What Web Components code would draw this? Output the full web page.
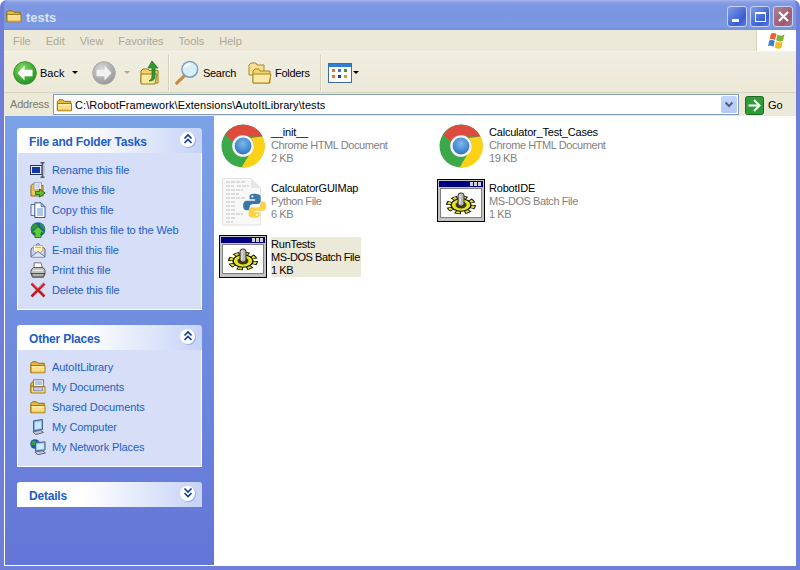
<!DOCTYPE html>
<html>
<head>
<meta charset="utf-8">
<title>tests</title>
<style>
html,body{margin:0;padding:0;height:100%;background:#fff;overflow:hidden;}
</style>
</head>
<body>

<xp-window>
    <xp-titlebar slot="top">tests</xp-titlebar>
    <xp-menubar slot="top"></xp-menubar>
    <xp-toolbar slot="top"></xp-toolbar>
    <xp-address slot="top" path="C:\RobotFramework\Extensions\AutoItLibrary\tests"></xp-address>

    <xp-sidebar slot="side">
        <task-panel heading="File and Folder Tasks">
            <task-link icon="rename">Rename this file</task-link>
            <task-link icon="move">Move this file</task-link>
            <task-link icon="copy">Copy this file</task-link>
            <task-link icon="publish">Publish this file to the Web</task-link>
            <task-link icon="email">E-mail this file</task-link>
            <task-link icon="print">Print this file</task-link>
            <task-link icon="delete">Delete this file</task-link>
        </task-panel>
        <task-panel heading="Other Places">
            <task-link icon="folder">AutoItLibrary</task-link>
            <task-link icon="docs">My Documents</task-link>
            <task-link icon="folder">Shared Documents</task-link>
            <task-link icon="computer">My Computer</task-link>
            <task-link icon="network">My Network Places</task-link>
        </task-panel>
        <task-panel heading="Details" collapsed></task-panel>
    </xp-sidebar>

    <file-grid slot="main">
        <file-tile icon="chrome" name="__init__" kind="Chrome HTML Document" size="2 KB"></file-tile>
        <file-tile icon="chrome" name="Calculator_Test_Cases" kind="Chrome HTML Document" size="19 KB"></file-tile>
        <file-tile icon="python" name="CalculatorGUIMap" kind="Python File" size="6 KB"></file-tile>
        <file-tile icon="batch" name="RobotIDE" kind="MS-DOS Batch File" size="1 KB"></file-tile>
        <file-tile icon="batch" name="RunTests" kind="MS-DOS Batch File" size="1 KB" selected></file-tile>
    </file-grid>
</xp-window>

<script>
// ICONS
const folderBody = `
    <path d="M.8 13.500V4.500L2.500 2.800H6.500L8 4.300H14.200V13.500Z" fill="#e9b93c" stroke="#8f6a14"/>
    <path d="M1 13.800V6.500H15V13.800Z" fill="#fbdf86" stroke="#a47a1a"/>
    <path d="M2 7.800H14" stroke="#fff3c4"/>
    <path d="M2 13H14" stroke="#e0ad35"/>`;

const smallIcons = {
    rename: `<rect x=".5" y="3.500" width="11" height="9" fill="#e6ebf6" stroke="#2d3350"/><rect x="2" y="5" width="8" height="6" fill="#0f3aa8"/>
        <path d="M12.500 .8V15.200M10.500 .8H14.500M10.500 15.200H14.500" stroke="#4d5570" stroke-width="1.500" fill="none"/><rect x="11.500" y="4" width="3.500" height="8" fill="#bcc6dc"/><path d="M12.500 3V13" stroke="#5a6280" stroke-width="1.200"/>`,
    move: `<path d="M1 14V3.500L2.500 2H6L7.500 3.500H13V14Z" fill="#f0c654" stroke="#8f6a14"/><rect x="4" y=".8" width="7.500" height="7" fill="#f4f6fb" stroke="#7d8aa8" stroke-width=".8"/>
        <path d="M5.500 3H10M5.500 5H10" stroke="#93a4c8" stroke-width=".8"/>
        <path d="M5.500 9.500H9.500V7L15.200 11 9.500 15V12.500H5.500Z" fill="#63bd35" stroke="#1d6f12" stroke-width=".9"/>`,
    copy: `<path d="M1 2.500H7.500L10 5V13.500H1Z" fill="#e9effb" stroke="#5d6f9d"/><path d="M4.800 .8H11L15 4.800V15.500H4.800Z" fill="#fff" stroke="#39598f"/>
        <path d="M11 .8V4.800H15Z" fill="#8fb1e6" stroke="#39598f" stroke-width=".6"/><path d="M7 7H13M7 9H13M7 11H13M7 13H13" stroke="#5f8bd6"/>`,
    publish: `<circle cx="8" cy="7.500" r="7.300" fill="#1f57bd"/><path d="M3 2.500C6 .8 8.500 2.500 7.500 5S3 6 2.500 8.500 .5 5 3 2.500ZM10 1C13.500 2 15.500 5.500 15 8 12.500 7 10 5 10 1Z" fill="#2e9a35"/>
        <path d="M8 4.500 14.500 10.800H11V15.500H5V10.800H1.500Z" fill="#5fcb3c" stroke="#1a7a1b" stroke-width=".9"/>`,
    email: `<path d="M1 7 8 1.500 15 7V15H1Z" fill="#c9d2ee" stroke="#5b6596"/><path d="M3.500 3.500H12.500V9L8 11.500 3.500 9Z" fill="#fff3c8" stroke="#d2ad4c" stroke-width=".8"/>
        <path d="M5 5.500H11" stroke="#e3b64f"/><path d="M1 14.800 8 9.500 15 14.800" stroke="#6d77a6" fill="#dfe5f7"/>`,
    print: `<path d="M4.200 .8H11L12.500 6H4Z" fill="#fbfbfb" stroke="#777"/><path d="M1 8 3.500 5.500H13L15 8V12H1Z" fill="#c2c2bc" stroke="#5a5a5a"/>
        <path d="M1 11.500H15L13.500 15.200H2.500Z" fill="#8a8a86" stroke="#4d4d4d"/><path d="M3 8.500H13" stroke="#efefea"/><path d="M3 13H13" stroke="#d6d6d0"/>`,
    delete: `<path d="M1.500 1.500 14.500 14.500M14.500 1.500 1.500 14.500" stroke="#c4181f" stroke-width="2.600"/><path d="M2 1.200 8 7.200M14 1.200 9 6.200" stroke="#f06a62" stroke-width=".8"/>`,
    folder: folderBody,
    docs: `<path d="M.8 13.500V4.500L2.500 2.800H5V13.500Z" fill="#e9b93c" stroke="#8f6a14"/><rect x="3.500" y=".8" width="10" height="8" fill="#f2f4fa" stroke="#6a7698"/>
        <path d="M5 3H12M5 5H12" stroke="#7f92c0"/><path d="M1 14V7.500H15V14Z" fill="#fbdf86" stroke="#a47a1a"/><rect x="3.500" y="8" width="9" height="3.800" fill="#bfcbe9" stroke="#66749c" stroke-width=".7"/>`,
    computer: `<path d="M3.500 1.800 12.500 .5V10.500L3.500 12Z" fill="#7fb4ee" stroke="#46608f"/><path d="M5 3.200 11.200 2.300V9.200L5 10.200Z" fill="#c6e8fd"/>
        <path d="M3 12.800 10.500 11.200 13.500 13.500 5.500 15.500Z" fill="#c5cae0" stroke="#5a6388"/>`,
    network: `<circle cx="5" cy="5" r="4.800" fill="#1b55ad"/><path d="M1.800 2.300C4 .8 6.500 1.800 6 4S3 6.200 1 6.500ZM7 1C9 2 9.800 4 8.500 5.500Z" fill="#37a02f"/>
        <path d="M5.500 3.800 15 2.800V11L5.500 12.200Z" fill="#8cc3f4" stroke="#46608f"/><path d="M7 5.200 13.700 4.500V9.700L7 10.600Z" fill="#cfeefe"/>
        <path d="M5 13 12.500 11.700 15.500 14 7.500 15.800Z" fill="#c5cae0" stroke="#5a6388"/>`
};

const chromeIcon = `
    <svg xmlns="http://www.w3.org/2000/svg" width="44" height="44" viewBox="0 0 44 44">
        <defs>
            <radialGradient id="ball" cx=".5" cy=".35" r=".7"><stop offset="0" stop-color="#7db8ec"/><stop offset="1" stop-color="#2a6fc0"/></radialGradient>
        </defs>
        <circle cx="22" cy="22" r="21.500" fill="#3ba84a"/>
        <path d="M4.200 10.500A21.500 21.500 0 0 1 41.500 12.500L22 12.500A10 10 0 0 0 12.800 18.500Z" fill="#dd4b3e"/>
        <path d="M41.500 12.500A21.500 21.500 0 0 1 20.500 43.500L30.500 27A10 10 0 0 0 30 14Z" fill="#fcd116"/>
        <circle cx="22" cy="22" r="10.800" fill="#f4f6f8"/>
        <circle cx="22" cy="22" r="8.400" fill="url(#ball)"/>
    </svg>`;

const pythonIcon = `
    <svg xmlns="http://www.w3.org/2000/svg" width="44" height="44" viewBox="0 0 44 44" style="overflow:visible">
        <path d="M1.500 -1.500H30L39.500 8V45H1.500Z" fill="#f8f8f8" stroke="#e2e2e2"/>
        <path d="M30 -1.500V8H39.500Z" fill="#e6e6e6"/>
        <path d="M5 2H24M5 6H13M16 6H28M5 10H22M5 14H18M5 18H24M5 22H15M5 26H14M5 30H14M5 34H22M5 38H15M5 42H12" stroke="#d2d2d2" stroke-width="1.300" stroke-dasharray="4 1"/>
        <g transform="translate(6.500,0) scale(.92)">
            <path d="M29 15C23 15 24 18 24 21H30V22.500H21C18 22.500 17 25 17 28S18 33 21 33H24V29.500C24 27 26 26 28 26H33C35 26 36 25 36 23V18C36 16 33 15 29 15Z" fill="#3b76a8"/>
            <path d="M30 41C36 41 35 38 35 35H29V33.500H38C41 33.500 42 31 42 28S41 23 38 23H36V26.500C36 29 34 30 32 30H26C24 30 23 31 23 33V38C23 40 26 41 30 41Z" fill="#fdd244"/>
            <circle cx="27" cy="18" r="1.100" fill="#fff"/><circle cx="32" cy="38" r="1.100" fill="#fff"/>
        </g>
    </svg>`;

const batchIcon = `
    <svg xmlns="http://www.w3.org/2000/svg" width="48" height="44" viewBox="0 0 48 44" shape-rendering="crispEdges" style="margin-top:-1px">
        <rect x="0" y="0" width="48" height="43" fill="#000"/>
        <rect x="1" y="1" width="46" height="41" fill="#c4c4c4"/>
        <rect x="2" y="2" width="44" height="6" fill="#000080"/>
        <rect x="33" y="3" width="3" height="4" fill="#d0d0d0"/><rect x="37" y="3" width="3" height="4" fill="#d0d0d0"/><rect x="41" y="3" width="3" height="4" fill="#d0d0d0"/>
        <rect x="3.500" y="9.500" width="41" height="29" fill="#fff" stroke="#808080"/>
        <g shape-rendering="auto" transform="translate(24,26) scale(1,.62)">
            <circle r="11.500" fill="none" stroke="#161608" stroke-width="7" stroke-dasharray="5.500 3.500"/>
            <circle r="11.500" fill="none" stroke="#dfe01e" stroke-width="4.500" stroke-dasharray="3.500 5.500" stroke-dashoffset="-1"/>
            <circle r="10" fill="#e6e420" stroke="#161608" stroke-width="1.500"/>
            <circle r="5.500" fill="#3a3a10"/>
        </g>
        <g shape-rendering="auto">
            <rect x="21" y="14" width="6" height="13" rx="2.500" fill="#b8b8b8" stroke="#2a2a2a"/>
            <path d="M23 15.500V25" stroke="#efefef"/>
        </g>
    </svg>`;

const fileIcons = { chrome: chromeIcon, python: pythonIcon, batch: batchIcon };

// TITLE BAR
const titleTemplate = document.createElement('template');
titleTemplate.innerHTML = `
<style>
    :host{
        display:flex;
        align-items:flex-start;
        height:30px;
        box-sizing:border-box;
        padding:0 3px 0 2px;
        gap:4px;
        background:linear-gradient(#a3b5ec 0,#8aa0e4 2px,#7e97e2 5px,#7a96df 16px,#7d99e4 26px,#7290dc 30px);
        color:#d8e4f8;
        font:bold 13px 'Liberation Sans',Arial,sans-serif;
    }
    svg.ico{margin-top:8px;flex:none;}
    .caption{flex:1;margin-top:10px;line-height:15px;}
    .btns{display:flex;gap:3px;margin-top:6px;}
    .btn{width:20px;height:21px;box-sizing:border-box;border:1px solid #c8d2f2;border-radius:3px;display:flex;align-items:center;justify-content:center;background:linear-gradient(135deg,#7e9ee8,#3a5ed0 70%,#5a7de0);}
    .btn.close{background:linear-gradient(135deg,#b07f95,#a05a70 70%,#a8788c);}
</style>
<svg class="ico" width="16" height="16" viewBox="0 0 16 16">${folderBody}</svg>
<span class="caption"><slot></slot></span>
<div class="btns">
    <div class="btn"><svg width="13" height="13"><rect x="1" y="9" width="7" height="3" fill="#fff"/></svg></div>
    <div class="btn"><svg width="13" height="13"><rect x="1.500" y="2.500" width="10" height="9" fill="none" stroke="#fff"/><rect x="1" y="2" width="11" height="2" fill="#fff"/></svg></div>
    <div class="btn close"><svg width="13" height="13"><path d="M2 2 11 11M11 2 2 11" stroke="#fff" stroke-width="2.200"/></svg></div>
</div>`;

class XpTitlebar extends HTMLElement{
    constructor(){
        super();
        this.attachShadow({mode:'open'});
        this.shadowRoot.appendChild(titleTemplate.content.cloneNode(true));
    }
}
customElements.define('xp-titlebar', XpTitlebar);

// MENU BAR
const menuTemplate = document.createElement('template');
menuTemplate.innerHTML = `
<style>
    :host{
        display:flex;
        height:22px;
        box-sizing:border-box;
        background:#ece9d8;
        border-bottom:1px solid #f5f3e9;
        color:#aca899;
        font:11px 'Liberation Sans',Arial,sans-serif;
    }
    nav{flex:1;display:flex;align-items:center;padding-left:9px;gap:15px;border-right:1px solid #d8d2bd;}
    .flag{width:39px;background:#fff;display:flex;align-items:center;justify-content:center;}
</style>
<nav><span>File</span><span>Edit</span><span>View</span><span>Favorites</span><span>Tools</span><span>Help</span></nav>
<div class="flag">
    <svg width="20" height="20" viewBox="0 0 20 20">
        <path d="M4 2.500C6.500 1.500 8 2 9.500 3L8 9C6.500 8 5 7.800 2.600 8.500Z" fill="#e9622e"/>
        <path d="M10.500 3.500C12.500 5 15 5 17.500 3.500L16 9.800C13.800 11 11.300 10.800 9.200 9.300Z" fill="#7fb532"/>
        <path d="M2.300 9.500C4.500 8.800 6.300 9 7.800 10L6.400 15.800C4.800 14.700 3 14.600 1 15.300Z" fill="#3a7fd5"/>
        <path d="M9 10.500C11 11.800 13.500 12 15.700 10.800L14.300 17C12.300 18 10 18 7.700 16.500Z" fill="#f3bb22"/>
    </svg>
</div>`;

class XpMenubar extends HTMLElement{
    constructor(){
        super();
        this.attachShadow({mode:'open'});
        this.shadowRoot.appendChild(menuTemplate.content.cloneNode(true));
    }
}
customElements.define('xp-menubar', XpMenubar);

// TOOLBAR
const toolbarTemplate = document.createElement('template');
toolbarTemplate.innerHTML = `
<style>
    :host{
        display:flex;
        align-items:center;
        height:41px;
        box-sizing:border-box;
        background:linear-gradient(#f0eee0,#ece9d8);
        border-bottom:1px solid #d8d2bd;
        padding:1px 0 0 9px;
        color:#000;
        font:11px 'Liberation Sans',Arial,sans-serif;
    }
    .tool{display:flex;align-items:center;flex:none;}
    svg{flex:none;}
    .sep{width:1px;height:36px;background:#d3cfba;box-shadow:1px 0 0 #f8f7f0;flex:none;}
    .caret{width:0;height:0;border:3px solid transparent;border-top:3px solid #000;border-bottom:0;flex:none;}
    .off{border-top-color:#aca899;}
</style>
<div class="tool" style="gap:3px">
    <svg width="24" height="24" viewBox="0 0 24 24">
        <defs><radialGradient id="gb" cx=".4" cy=".3" r=".8"><stop offset="0" stop-color="#7edc5c"/><stop offset="1" stop-color="#168a18"/></radialGradient></defs>
        <circle cx="12" cy="12" r="11.300" fill="url(#gb)" stroke="#3f8f30"/>
        <path d="M11.500 4.500 4.500 12 11.500 19.500V15.200H19.500V8.800H11.500Z" fill="#fff"/>
    </svg><span style="width:24px">Back</span>
</div>
<div class="caret" style="margin-left:8px"></div>
<div class="tool" style="margin-left:14px">
    <svg width="24" height="24" viewBox="0 0 24 24">
        <defs><radialGradient id="gg" cx=".4" cy=".3" r=".8"><stop offset="0" stop-color="#d8d8d8"/><stop offset="1" stop-color="#8f8f8f"/></radialGradient></defs>
        <circle cx="12" cy="12" r="11.300" fill="url(#gg)" stroke="#a8a8a8"/>
        <path d="M12.500 4.500 19.500 12 12.500 19.500V15.200H4.500V8.800H12.500Z" fill="#f2f2f2"/>
    </svg>
</div>
<div class="caret off" style="margin-left:8px"></div>
<div class="tool" style="margin-left:10px">
    <svg width="20" height="26" viewBox="0 0 20 26">
        <path d="M1 11 3 9H8L9 10.500H18V23H1Z" fill="#f3d268" stroke="#9a7a1e"/>
        <path d="M1 14H17L15 24H1Z" fill="#fbe89c" stroke="#9a7a1e"/>
        <path d="M12 1 18 8H15V17C15 20 12 21 9 21 11 20 12 18 12 16V8H8Z" fill="#2f9a31" stroke="#1c6e1c" stroke-width=".7"/>
    </svg>
</div>
<div class="sep" style="margin-left:8px"></div>
<div class="tool" style="margin-left:5px;gap:3px">
    <svg width="26" height="26" viewBox="0 0 28 28">
        <path d="M11 17 3 25" stroke="#cf8a3c" stroke-width="3.500" stroke-linecap="round"/>
        <circle cx="17" cy="10" r="8.500" fill="#d9eefb" stroke="#7a9cc2" stroke-width="1.600"/>
        <path d="M12 8C13 5.500 16 4 18 4.500" stroke="#fff" stroke-width="2" fill="none"/>
    </svg><span style="width:35px;letter-spacing:-.3px">Search</span>
</div>
<div class="tool" style="margin-left:10px;gap:3px">
    <svg width="24" height="24" viewBox="0 0 24 24">
        <path d="M1 4 3 2H8L9 4H16V14H1Z" fill="#f6df8f" stroke="#a8872a"/>
        <path d="M5 10 7 8H11L12 10H22V22H5Z" fill="#f3d268" stroke="#a8872a"/>
        <path d="M5 13H23L21 22H5Z" fill="#fbe9a5" stroke="#a8872a"/>
    </svg><span style="width:34px;letter-spacing:-.3px">Folders</span>
</div>
<div class="sep" style="margin-left:11px"></div>
<div class="tool" style="margin-left:7px;gap:1px">
    <svg width="24" height="20" viewBox="0 0 24 20" shape-rendering="crispEdges">
        <rect x=".5" y=".5" width="23" height="19" fill="#fff" stroke="#3a6ea5"/><rect x="1" y="1" width="22" height="3" fill="#2f7ed8"/>
        <rect x="4" y="6" width="3" height="3" fill="#e8742a"/><rect x="10" y="6" width="3" height="3" fill="#4a70c8"/><rect x="16" y="6" width="3" height="3" fill="#3a9a3a"/>
        <rect x="4" y="12" width="3" height="3" fill="#e8742a"/><rect x="10" y="12" width="3" height="3" fill="#1a3f9a"/><rect x="16" y="12" width="3" height="3" fill="#d89a20"/>
    </svg>
    <div class="caret"></div>
</div>`;

class XpToolbar extends HTMLElement{
    constructor(){
        super();
        this.attachShadow({mode:'open'});
        this.shadowRoot.appendChild(toolbarTemplate.content.cloneNode(true));
    }
}
customElements.define('xp-toolbar', XpToolbar);

// ADDRESS BAR
class XpAddress extends HTMLElement{
    constructor(){
        super();
        this.attachShadow({mode:'open'});
        this.shadowRoot.innerHTML = `
        <style>
            :host{
                display:flex;
                align-items:stretch;
                height:23px;
                box-sizing:border-box;
                background:#ece9d8;
                padding:1px 0 0 0;
                font:11px 'Liberation Sans',Arial,sans-serif;
            }
            .label{width:49px;padding-left:6px;box-sizing:border-box;color:#7a7a6c;line-height:21px;letter-spacing:-.2px;}
            .box{flex:1;display:flex;align-items:center;background:#fff;border:1px solid #7f9db9;padding-left:2px;gap:2px;color:#000;height:21px;box-sizing:border-box;}
            .box svg{flex:none;}
            .path{flex:1;letter-spacing:.07px;}
            .drop{width:16px;height:17px;margin-right:1px;background:linear-gradient(#c4d6f8,#b3c8f5);border-radius:2px;display:flex;align-items:center;justify-content:center;}
            .go{width:57px;display:flex;align-items:center;gap:4px;padding-left:6px;box-sizing:border-box;color:#000;}
        </style>
        <div class="label">Address</div>
        <div class="box">
            <svg width="17" height="16" viewBox="0 0 16 16">${folderBody}</svg>
            <span class="path">${this.getAttribute('path')}</span>
            <div class="drop"><svg width="10" height="8"><path d="M1.500 1.500 5 5 8.500 1.500" stroke="#4d6185" stroke-width="2" fill="none"/></svg></div>
        </div>
        <div class="go">
            <svg width="19" height="19" viewBox="0 0 19 19">
                <rect x=".5" y=".5" width="18" height="18" rx="2" fill="#2f9a38" stroke="#1a6b20"/>
                <path d="M9 4 14.500 9.500 9 15M3.500 9.500H14" stroke="#fff" stroke-width="2" fill="none"/>
            </svg><span>Go</span>
        </div>`;
    }
}
customElements.define('xp-address', XpAddress);

// SIDEBAR
class XpSidebar extends HTMLElement{
    constructor(){
        super();
        this.attachShadow({mode:'open'});
        this.shadowRoot.innerHTML = `
        <style>
            :host{
                display:flex;
                flex-direction:column;
                gap:15px;
                box-sizing:border-box;
                width:209px;
                flex:none;
                padding:12px 12px 0 12px;
                background:linear-gradient(#7ba2e7,#6375d6);
            }
        </style>
        <slot></slot>`;
    }
}
customElements.define('xp-sidebar', XpSidebar);

// TASK PANEL
class TaskPanel extends HTMLElement{
    constructor(){
        super();
        this.attachShadow({mode:'open'});
        const collapsed = this.hasAttribute('collapsed');
        const chevrons = collapsed
            ? 'M3.500 2.500 7 6 10.500 2.500M3.500 7 7 10.500 10.500 7'
            : 'M3.500 6.500 7 3 10.500 6.500M3.500 11 7 7.500 10.500 11';
        this.shadowRoot.innerHTML = `
        <style>
            :host{display:block;font:11px 'Liberation Sans',Arial,sans-serif;}
            header{
                display:flex;
                align-items:center;
                justify-content:space-between;
                height:25px;
                box-sizing:border-box;
                padding:2px 7px 0 12px;
                background:linear-gradient(90deg,#fff 35%,#c6d3f7);
                border-radius:3px 3px 0 0;
                color:#215dc6;
                font-weight:bold;
                font-size:12px;
                letter-spacing:-.2px;
            }
            .toggle{width:15px;height:15px;border-radius:50%;background:#fff;box-shadow:1px 1px 1px #9fb0dc;display:flex;align-items:center;justify-content:center;margin-top:-5px;}
            .body{background:#d6dff7;border:1px solid #fff;border-top:0;padding:7px 0 9px 12px;display:flex;flex-direction:column;}
            .body.hidden{display:none;}
        </style>
        <header><span>${this.getAttribute('heading')}</span>
            <div class="toggle"><svg width="14" height="14"><path d="${chevrons}" stroke="#0a3a9a" stroke-width="1.600" fill="none"/></svg></div>
        </header>
        <div class="body ${collapsed ? 'hidden' : ''}"><slot></slot></div>`;
    }
}
customElements.define('task-panel', TaskPanel);

class TaskLink extends HTMLElement{
    constructor(){
        super();
        this.attachShadow({mode:'open'});
        this.shadowRoot.innerHTML = `
        <style>
            :host{display:flex;align-items:center;height:20px;gap:6px;color:#215dc6;font:11px 'Liberation Sans',Arial,sans-serif;letter-spacing:-.1px;}
            svg{flex:none;}
        </style>
        <svg width="16" height="16" viewBox="0 0 16 16">${smallIcons[this.getAttribute('icon')]}</svg>
        <span><slot></slot></span>`;
    }
}
customElements.define('task-link', TaskLink);

// FILE VIEW
class FileGrid extends HTMLElement{
    constructor(){
        super();
        this.attachShadow({mode:'open'});
        this.shadowRoot.innerHTML = `
        <style>
            :host{
                display:grid;
                grid-template-columns:218px 218px;
                grid-auto-rows:56px;
                align-content:start;
                flex:1;
                padding:2px 0 0 5px;
                background:#fff;
            }
        </style>
        <slot></slot>`;
    }
}
customElements.define('file-grid', FileGrid);

class FileTile extends HTMLElement{
    constructor(){
        super();
        this.attachShadow({mode:'open'});
        const selected = this.hasAttribute('selected');
        this.shadowRoot.innerHTML = `
        <style>
            :host{display:flex;align-items:center;font:11px 'Liberation Sans',Arial,sans-serif;color:#000;}
            .pic{width:48px;height:44px;flex:none;margin-right:4px;display:flex;justify-content:center;}
            .info{line-height:13px;color:${selected ? '#000' : '#7f7f7f'};padding:1px 1px 0 0;margin-top:-2px;letter-spacing:-.42px;}
            .info.sel{background:#ece9d8;}
            .name{color:#000;letter-spacing:-.2px;}
        </style>
        <div class="pic">${fileIcons[this.getAttribute('icon')]}</div>
        <div class="info ${selected ? 'sel' : ''}">
            <div class="name">${this.getAttribute('name')}</div>
            <div>${this.getAttribute('kind')}</div>
            <div>${this.getAttribute('size')}</div>
        </div>`;
    }
}
customElements.define('file-tile', FileTile);

// WINDOW
const windowTemplate = document.createElement('template');
windowTemplate.innerHTML = `
<style>
    :host{
        display:flex;
        flex-direction:column;
        width:800px;
        height:570px;
        box-sizing:border-box;
        background:#7a96df;
        border-left:4px solid #6f7fd9;
        border-right:4px solid #6f7fd9;
        border-bottom:4px solid #6f7fd9;
        border-radius:7px 7px 0 0;
        overflow:hidden;
    }
    .content{flex:1;display:flex;min-height:0;border-left:1px solid #fff;border-bottom:1px solid #fff;background:#fff;}
</style>
<slot name="top"></slot>
<div class="content">
    <slot name="side"></slot>
    <slot name="main"></slot>
</div>`;

class XpWindow extends HTMLElement{
    constructor(){
        super();
        this.attachShadow({mode:'open'});
        this.shadowRoot.appendChild(windowTemplate.content.cloneNode(true));
    }
}
customElements.define('xp-window', XpWindow);
</script>
</body>
</html>
